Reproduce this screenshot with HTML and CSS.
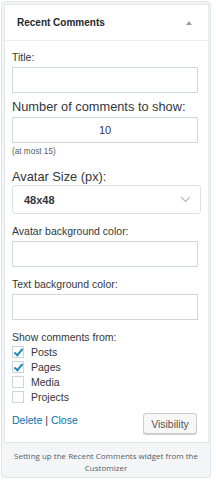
FILE: index.html
```html
<!DOCTYPE html>
<html lang="en">
<head>
    <meta charset="UTF-8">
    <meta name="viewport" content="width=device-width, initial-scale=1.0">
    <title>Recent Comments Widget</title>
    <link rel="stylesheet" href="styles.css">
</head>
<body>
    <div class="frame">
        <div class="widget">
            <div class="widget-header">
                <h3>Recent Comments</h3>
                <span class="toggle"></span>
            </div>

            <div class="widget-content">
                <div class="field">
                    <label>Title:</label>
                    <div class="input"></div>
                </div>

                <div class="field">
                    <label class="large">Number of comments to show:</label>
                    <div class="input input-center">10</div>
                    <div class="hint">(at most 15)</div>
                </div>

                <div class="field field-wide">
                    <label class="large tight">Avatar Size (px):</label>
                    <div class="select">
                        <span>48x48</span>
                        <svg width="11" height="7" viewBox="0 0 11 7">
                            <path d="M1 1 L5.5 5.5 L10 1" fill="none" stroke="#b4bcc4" stroke-width="1.2"/>
                        </svg>
                    </div>
                </div>

                <div class="field field-wide">
                    <label>Avatar background color:</label>
                    <div class="input"></div>
                </div>

                <div class="field field-wide">
                    <label>Text background color:</label>
                    <div class="input"></div>
                </div>

                <div class="field field-last">
                    <label>Show comments from:</label>
                    <div class="checks">
                        <div class="check-row"><span class="box checked"></span>Posts</div>
                        <div class="check-row"><span class="box checked"></span>Pages</div>
                        <div class="check-row"><span class="box"></span>Media</div>
                        <div class="check-row"><span class="box"></span>Projects</div>
                    </div>
                </div>

                <div class="actions">
                    <div class="links">
                        <a href="#">Delete</a> | <a href="#">Close</a>
                    </div>
                    <button class="btn">Visibility</button>
                </div>
            </div>
        </div>

        <p class="caption">Setting up the Recent Comments widget from the Customizer</p>
    </div>
</body>
</html>
```

FILE: styles.css
```css
* {
    margin: 0;
    padding: 0;
    box-sizing: border-box;
}

body {
    font-family: "Liberation Sans", Arial, sans-serif;
    background: #ffffff;
    color: #32373c;
}

.frame {
    margin: 1px 0 0 1px;
    width: 210px;
    height: 477px;
    background: #f3f5f7;
    border: 1px solid #e1e4e8;
    border-radius: 4px;
    padding: 2px 0 0 2px;
}

.widget {
    width: 205px;
    background: #fff;
    border: 1px solid #e4e6e9;
}

.widget-header {
    height: 36px;
    display: flex;
    align-items: center;
    justify-content: space-between;
    padding: 0 16px 0 12px;
    border-bottom: 1px solid #eceef0;
}

.widget-header h3 {
    font-size: 10px;
    font-weight: bold;
    color: #23282d;
}

.toggle {
    width: 0;
    height: 0;
    border-left: 3px solid transparent;
    border-right: 3px solid transparent;
    border-bottom: 4px solid #9aa0a6;
    margin-top: 1px;
}

.widget-content {
    padding: 9px 0 8px 7px;
}

.field {
    margin-bottom: 7px;
}

.field-wide {
    margin-bottom: 10px;
}

.field-last {
    margin-bottom: 0;
}

.field label {
    display: block;
    font-size: 10.5px;
    line-height: 14px;
    margin-bottom: 3px;
    color: #32373c;
    white-space: nowrap;
}

.field label.large {
    font-size: 12.8px;
}

.field label.tight {
    margin-bottom: 1px;
}

.input {
    width: 186px;
    height: 26px;
    border: 1px solid #d2d7db;
    background: #fff;
    font-size: 11px;
    line-height: 24px;
}

.input-center {
    text-align: center;
}

.hint {
    font-size: 8.2px;
    line-height: 10px;
    margin: 4px 0 13px;
    color: #555d66;
}

.select {
    width: 189px;
    height: 29px;
    border: 1px solid #dde1e5;
    border-radius: 3px;
    display: flex;
    align-items: center;
    justify-content: space-between;
    padding: 0 9px 0 11px;
    font-size: 11px;
    font-weight: bold;
    color: #32373c;
}

.checks {
    display: flex;
    flex-direction: column;
    margin-top: -3px;
}

.check-row {
    display: flex;
    align-items: center;
    height: 15px;
    font-size: 10.5px;
    color: #32373c;
}

.box {
    width: 12px;
    height: 12px;
    border: 1px solid #cfd4d8;
    background: #fff;
    margin-right: 7px;
    position: relative;
}

.box.checked::after {
    content: "";
    position: absolute;
    left: 3px;
    top: 0px;
    width: 3px;
    height: 7px;
    border-right: 2px solid #1e8cbe;
    border-bottom: 2px solid #1e8cbe;
    transform: rotate(40deg);
}

.actions {
    display: flex;
    justify-content: space-between;
    align-items: flex-start;
    padding-right: 11px;
}

.links {
    font-size: 10.5px;
    line-height: 12px;
    margin-top: 10px;
    color: #32373c;
}

.links a {
    color: #0073aa;
    text-decoration: none;
}

.btn {
    font-family: "Liberation Sans", Arial, sans-serif;
    font-size: 10.5px;
    color: #555;
    background: #f7f7f7;
    border: 1px solid #cccccc;
    border-radius: 3px;
    box-shadow: 0 1px 0 #cccccc;
    width: 54px;
    height: 21px;
    margin-top: 9px;
}

.caption {
    font-family: "Open Sans", sans-serif;
    font-size: 8px;
    line-height: 12px;
    color: #555d66;
    text-align: center;
    padding: 7px 4px 0 2px;
}
```
